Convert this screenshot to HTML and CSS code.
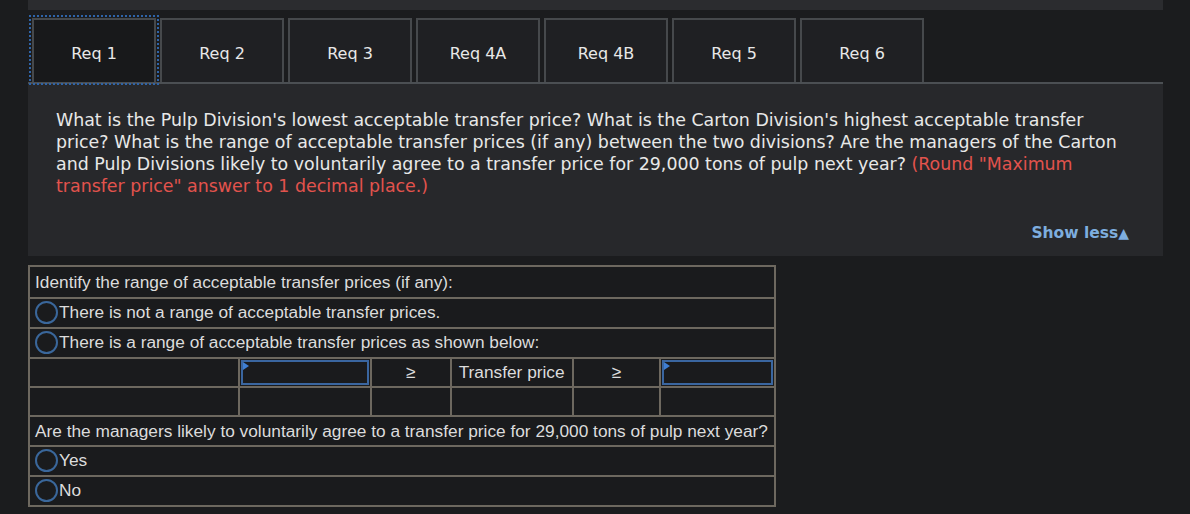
FILE: index.html
```html
<!DOCTYPE html>
<html lang="en">
<head>
    <meta charset="UTF-8">
    <title>Req 1</title>
    <link rel="stylesheet" href="styles.css">
</head>
<body>
    <div class="main">
        <div class="top-band"></div>

        <div class="tabs">
            <div class="tab active">Req 1</div>
            <div class="tab">Req 2</div>
            <div class="tab">Req 3</div>
            <div class="tab">Req 4A</div>
            <div class="tab">Req 4B</div>
            <div class="tab">Req 5</div>
            <div class="tab">Req 6</div>
        </div>

        <div class="question">
            <p class="question-text">What is the Pulp Division's lowest acceptable transfer price? What is the Carton Division's highest acceptable transfer price? What is the range of acceptable transfer prices (if any) between the two divisions? Are the managers of the Carton and Pulp Divisions likely to voluntarily agree to a transfer price for 29,000 tons of pulp next year? <span class="hint">(Round "Maximum transfer price" answer to 1 decimal place.)</span></p>
            <div class="show-less">Show less<span class="arrow">&#9650;</span></div>
        </div>

        <table class="answer-table">
            <tr class="row-head">
                <td colspan="6">Identify the range of acceptable transfer prices (if any):</td>
            </tr>
            <tr>
                <td colspan="6"><span class="radio"></span>There is not a range of acceptable transfer prices.</td>
            </tr>
            <tr>
                <td colspan="6"><span class="radio"></span>There is a range of acceptable transfer prices as shown below:</td>
            </tr>
            <tr class="grid-row">
                <td class="c1"></td>
                <td class="c2"><div class="input"></div></td>
                <td class="c3 center">&ge;</td>
                <td class="c4 center">Transfer price</td>
                <td class="c5 center">&ge;</td>
                <td class="c6"><div class="input"></div></td>
            </tr>
            <tr class="grid-row">
                <td></td>
                <td></td>
                <td></td>
                <td></td>
                <td></td>
                <td></td>
            </tr>
            <tr>
                <td colspan="6">Are the managers likely to voluntarily agree to a transfer price for 29,000 tons of pulp next year?</td>
            </tr>
            <tr>
                <td colspan="6"><span class="radio"></span>Yes</td>
            </tr>
            <tr>
                <td colspan="6"><span class="radio"></span>No</td>
            </tr>
        </table>
    </div>
</body>
</html>
```

FILE: styles.css
```css
* {
    box-sizing: border-box;
    margin: 0;
    padding: 0;
}

body {
    background: #1b1c1e;
    font-family: "DejaVu Sans", Verdana, sans-serif;
    color: #e6e6e6;
}

.main {
    margin-left: 28px;
    width: 1135px;
}

.top-band {
    height: 10px;
    background: #2b2c2f;
}

/* tabs */
.tabs {
    display: flex;
    gap: 4px;
    padding: 8px 0 0 4px;
    border-bottom: 2px solid #4b4f53;
}

.tab {
    width: 124px;
    height: 64px;
    padding-top: 4px;
    border: 2px solid #46494c;
    border-bottom: none;
    background: #1f2023;
    display: flex;
    align-items: center;
    justify-content: center;
    font-size: 16px;
    color: #e8e8e8;
}

.tab.active {
    background: #18191b;
    outline: 2px dotted #2f64a8;
    outline-offset: 1px;
}

/* question */
.question {
    background: #27282b;
    padding: 25px 34px 14px 28px;
    height: 172px;
    display: flex;
    flex-direction: column;
}

.question-text {
    font-size: 17.4px;
    line-height: 22px;
    color: #e8e8e8;
}

.hint {
    color: #e2534d;
}

.show-less {
    margin-top: auto;
    align-self: flex-end;
    font-size: 15.5px;
    font-weight: bold;
    color: #7eaedf;
}

.arrow {
    font-size: 14px;
}

/* answer table */
.answer-table {
    margin-top: 9px;
    width: 748px;
    border-collapse: collapse;
    background: #1a1b1d;
    font-family: "Liberation Sans", Arial, sans-serif;
    font-size: 17.3px;
    color: #dcdcdc;
}

.answer-table td {
    border: 2px solid #6d685f;
    height: 30px;
    padding: 0 2px 0 5px;
    vertical-align: middle;
    white-space: nowrap;
}

.answer-table .row-head td {
    height: 32px;
}

.answer-table .grid-row td {
    height: 29px;
}

.c1 { width: 211px; }
.c2 { width: 132px; }
.c3 { width: 80px; }
.c4 { width: 122px; }
.c5 { width: 88px; }
.c6 { width: 115px; }

.answer-table td.c2,
.answer-table td.c6 {
    padding: 1px;
}

.answer-table td.center {
    padding: 0;
    text-align: center;
}

.radio {
    display: inline-block;
    width: 23px;
    height: 23px;
    border: 2px solid #3a679b;
    border-radius: 50%;
    vertical-align: middle;
    margin: -3px 1px 0 0;
}

.input {
    position: relative;
    height: 25px;
    border: 2px solid #3a66a0;
}

.input::before {
    content: "";
    position: absolute;
    top: 0;
    left: 0;
    border-left: 6px solid #3f7fd3;
    border-top: 4px solid transparent;
    border-bottom: 4px solid transparent;
}
```
